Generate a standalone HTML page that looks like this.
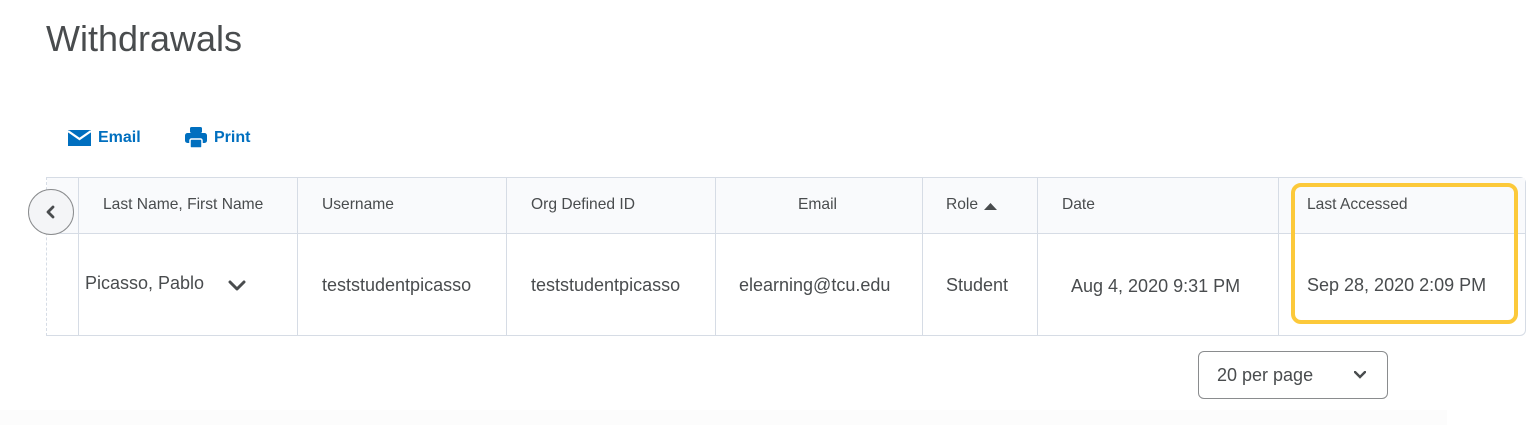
<!DOCTYPE html>
<html><head><style>
body{margin:0;width:1536px;height:425px;background:#fff;font-family:"Liberation Sans",sans-serif;color:#494c4e;position:relative;overflow:hidden}
.a{position:absolute;white-space:nowrap}
h1{position:absolute;left:46px;top:18px;margin:0;font-weight:normal;font-size:36px;color:#494c4e}
.lnk{color:#006fbf;font-weight:bold;font-size:16px}
.th{font-size:15.6px;top:196px}
.td{font-size:18px;top:275px}
.v{position:absolute;top:177px;height:159px;width:1px;background:#d6dce5}
</style></head><body>
<h1>Withdrawals</h1>
<svg class="a" style="left:68px;top:130px" width="23" height="16" viewBox="0 0 23 16"><rect x="0" y="0" width="23" height="16" fill="#006fbf"/><path d="M0 1 L11.5 9 L23 1" stroke="#fff" stroke-width="2.2" fill="none"/></svg>
<span class="a lnk" style="left:98px;top:129px">Email</span>
<svg class="a" style="left:185px;top:127px" width="22" height="22" viewBox="0 0 22 22"><rect x="5" y="0" width="12" height="6" rx="1.5" fill="#006fbf"/><rect x="0" y="6" width="22" height="10" rx="2.5" fill="#006fbf"/><rect x="5" y="12" width="12" height="9" rx="1.5" fill="#006fbf" stroke="#fff" stroke-width="1.5"/></svg>
<span class="a lnk" style="left:214px;top:129px">Print</span>
<div class="a" style="left:46px;top:177px;width:1480px;height:159px;border:1px solid #d6dce5;border-left:1px dashed #d6dce5;border-radius:0 6px 6px 0;box-sizing:border-box"></div>
<div class="a" style="left:47px;top:178px;width:1478px;height:55px;background:#f9fafc;border-bottom:1px solid #d6dce5"></div>
<div class="v" style="left:78px"></div><div class="v" style="left:297px"></div><div class="v" style="left:506px"></div><div class="v" style="left:715px"></div><div class="v" style="left:922px"></div><div class="v" style="left:1037px"></div><div class="v" style="left:1278px"></div>
<div class="a" style="left:28px;top:189px;width:46px;height:46px;border:1px solid #8a8c8e;border-radius:50%;background:#f4f5f7;box-sizing:border-box"></div>
<svg class="a" style="left:44px;top:205px" width="14" height="14"><path d="M9 2 L4 7 L9 12" stroke="#494c4e" stroke-width="2.8" fill="none" stroke-linecap="round" stroke-linejoin="round"/></svg>
<span class="a th" style="left:103px">Last Name, First Name</span>
<span class="a th" style="left:322px">Username</span>
<span class="a th" style="left:531px">Org Defined ID</span>
<span class="a th" style="left:798px">Email</span>
<span class="a th" style="left:946px">Role</span>
<svg class="a" style="left:984px;top:203px" width="13" height="8"><path d="M0 7 L6.5 0 L13 7Z" fill="#494c4e"/></svg>
<span class="a th" style="left:1062px">Date</span>
<span class="a th" style="left:1307px">Last Accessed</span>
<span class="a td" style="left:85px;top:273px">Picasso, Pablo</span>
<svg class="a" style="left:228px;top:280px" width="18" height="12"><path d="M2 2 L9 9 L16 2" stroke="#494c4e" stroke-width="3" fill="none" stroke-linecap="round" stroke-linejoin="round"/></svg>
<span class="a td" style="left:322px">teststudentpicasso</span>
<span class="a td" style="left:531px">teststudentpicasso</span>
<span class="a td" style="left:739px">elearning@tcu.edu</span>
<span class="a td" style="left:946px">Student</span>
<span class="a td" style="left:1071px;top:276px">Aug 4, 2020 9:31 PM</span>
<span class="a td" style="left:1307px">Sep 28, 2020 2:09 PM</span>
<div class="a" style="left:1291px;top:183px;width:227px;height:141px;border:4.5px solid #fcc93a;border-radius:10px;box-sizing:border-box"></div>
<div class="a" style="left:1198px;top:351px;width:190px;height:48px;border:1px solid #8a8c8e;border-radius:6px;box-sizing:border-box"></div>
<span class="a" style="left:1217px;top:365px;font-size:18px">20 per page</span>
<svg class="a" style="left:1354px;top:371px" width="12" height="8"><path d="M1 1 L6 6 L11 1" stroke="#494c4e" stroke-width="2.4" fill="none" stroke-linecap="round"/></svg>
<div class="a" style="left:0;top:410px;width:1447px;height:15px;background:#fcfcfc"></div>
</body></html>
